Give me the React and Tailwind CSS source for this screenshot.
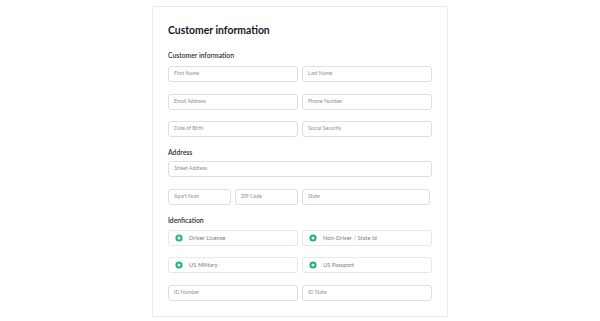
import React from "react";

const Input = ({ label, className = "" }) => (
  <div
    className={`h-[16px] rounded-[3px] border border-[#dcdfe3] bg-white flex items-center pl-[5px] text-[5.2px] text-[#8a8f98] ${className}`}
  >
    {label}
  </div>
);

const Radio = ({ label, checked }) => (
  <div className="h-[16px] rounded-[3px] border border-[#e6e8eb] bg-white flex items-center pl-[6px] gap-[6px] text-[5.8px] text-[#777c84]">
    <svg width="8" height="8" viewBox="0 0 8 8">
      <circle cx="4" cy="4" r="3.6" fill="#22b37a" />
      {checked ? (
        <path d="M4 2.2V5.8M2.2 4H5.8" stroke="#fff" strokeWidth="1.1" />
      ) : (
        <circle cx="4" cy="4" r="1.5" fill="#e9f8f1" />
      )}
    </svg>
    <span>{label}</span>
  </div>
);

const Heading = ({ children }) => (
  <div className="h-[10px] leading-[10px] text-[6.8px] font-semibold text-[#2c2f36]">
    {children}
  </div>
);

export default function App() {
  return (
    <div className="w-[600px] h-[321px] bg-white overflow-hidden" style={{ fontFamily: "Lato, 'Open Sans', sans-serif" }}>
      <div className="mx-auto mt-[6px] w-[296px] border border-[#e9eaec] bg-white pl-[15px] pr-[15px] pt-[15px] pb-[15px]">
        <div className="h-[16px] leading-[16px] text-[10.4px] font-bold text-[#15171f]">Customer information</div>
        <div className="mt-[12px]">
          <Heading>Customer information</Heading>
        </div>
        <div className="mt-[6px] grid grid-cols-2 gap-x-[4px] gap-y-[11.5px]">
          <Input label="First Name" />
          <Input label="Last Name" />
          <Input label="Email Address" />
          <Input label="Phone Number" />
          <Input label="Date of Birth" />
          <Input label="Social Security" />
        </div>
        <div className="mt-[10px]">
          <Heading>Address</Heading>
        </div>
        <div className="mt-[4px]">
          <Input label="Street Address" />
        </div>
        <div className="mt-[12px] grid grid-cols-2 gap-x-[4px]">
          <div className="grid grid-cols-2 gap-x-[4px]">
            <Input label="Apart Num" />
            <Input label="ZIP Code" />
          </div>
          <Input label="State" className="mr-[2px]" />
        </div>
        <div className="mt-[10px]">
          <Heading>Idenfication</Heading>
        </div>
        <div className="mt-[5px] grid grid-cols-2 gap-x-[4px] gap-y-[11px]">
          <Radio label="Driver License" checked />
          <Radio label="Non-Driver / State Id" />
          <Radio label="US Military" />
          <Radio label="US Passport" />
        </div>
        <div className="mt-[12px] grid grid-cols-2 gap-x-[4px]">
          <Input label="ID Number" />
          <Input label="ID State" />
        </div>
      </div>
    </div>
  );
}
